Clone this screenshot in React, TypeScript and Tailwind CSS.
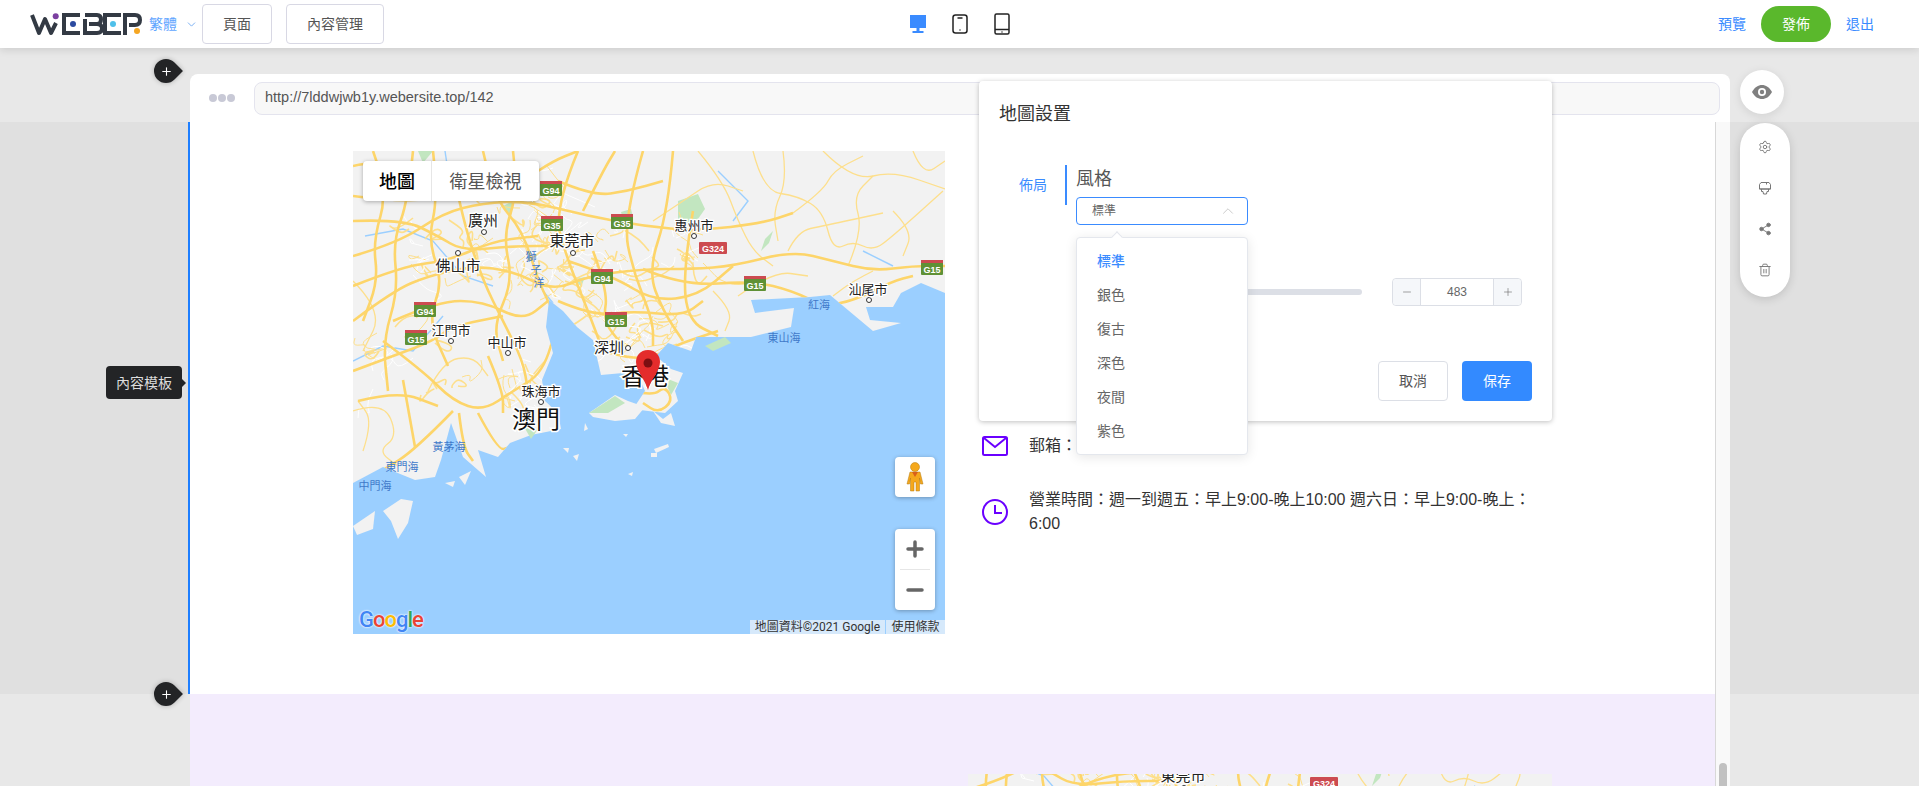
import { Settings, Share2, Trash2, ChevronDown, ChevronUp, Plus, Minus } from "lucide-react";

const ROADS_MAJOR = [
  [0, 105, 45, 92, 90, 62, 130, 52, 175, 50, 235, 65, 290, 75, 345, 80, 410, 72, 440, 62],
  [0, 45, 40, 50, 80, 48, 130, 42, 170, 30, 200, 10, 225, 0],
  [0, 170, 40, 140, 75, 125, 120, 115, 160, 120, 200, 140, 235, 125, 290, 118, 340, 118, 380, 115, 440, 100, 480, 110, 520, 120, 560, 115, 592, 115],
  [290, 118, 330, 135, 400, 130, 440, 140, 470, 155, 500, 150, 540, 130, 560, 125],
  [60, 0, 55, 50, 40, 90, 45, 140, 30, 190, 35, 240],
  [100, 20, 110, 70, 130, 130, 150, 170, 170, 210, 175, 240],
  [130, 0, 140, 45, 170, 80, 185, 130, 205, 170],
  [225, 0, 200, 60, 215, 110, 235, 160, 250, 200],
  [290, 0, 270, 70, 280, 120, 300, 170, 300, 195],
  [320, 0, 315, 60, 295, 120, 310, 160, 330, 190],
  [340, 60, 330, 120, 335, 170, 365, 185],
  [0, 220, 40, 205, 80, 190, 100, 175, 150, 165],
  [30, 190, 70, 220, 100, 250, 130, 260, 160, 240, 190, 222, 205, 170],
  [100, 260, 62, 299, 30, 319, 1, 336],
  [50, 229, 62, 296],
  [106, 262, 110, 296, 120, 310],
  [125, 262, 145, 300, 157, 296],
  [250, 200, 290, 212, 320, 195, 365, 180],
  [0, 15, 30, 8, 60, 30, 100, 40, 130, 30],
  [230, 60, 250, 20, 262, 0],
  [280, 240, 300, 245, 312, 235, 320, 250, 305, 262, 290, 252],
  [255, 250, 280, 240],
  [0, 70, 50, 68, 85, 85, 110, 100, 160, 95, 205, 95],
  [215, 110, 260, 125, 300, 150, 345, 145, 380, 115],
  [20, 0, 35, 40, 20, 90, 25, 130, 10, 170],
  [80, 0, 85, 45, 75, 90, 90, 130, 75, 170, 95, 215],
  [160, 0, 165, 40, 150, 85, 160, 130, 140, 175, 150, 210],
  [0, 135, 50, 115, 95, 110, 140, 90, 185, 85],
  [40, 170, 85, 150, 130, 150, 170, 170, 195, 150],
  [205, 30, 240, 45, 275, 40, 310, 30],
  [205, 150, 240, 165, 280, 160, 330, 165, 350, 150],
  [240, 100, 255, 140, 250, 170, 270, 195],
  [5, 250, 45, 240, 85, 255],
  [135, 205, 150, 240, 150, 262],
];

const ROADS_MINOR = [
  [400, 0, 410, 40, 445, 45, 470, 60, 480, 100, 500, 90, 520, 100, 540, 85, 590, 40],
  [345, 0, 370, 30, 385, 70, 400, 100, 420, 115],
  [440, 62, 470, 40, 480, 20, 510, 5],
  [520, 120, 500, 130, 480, 145],
  [0, 260, 30, 250, 45, 285, 25, 300, 45, 315],
  [470, 0, 500, 30, 540, 20, 592, 38],
  [360, 140, 380, 160, 372, 180],
  [300, 70, 330, 50, 360, 30, 390, 40],
  [0, 130, 30, 160, 10, 200],
  [75, 240, 90, 210, 120, 205, 135, 225],
  [435, 100, 445, 80, 470, 75, 530, 62],
  [430, 0, 434, 30, 420, 60, 425, 90],
  [540, 60, 560, 80, 550, 105],
  [495, 115, 510, 80, 500, 45, 520, 25],
  [560, 0, 570, 25, 592, 10],
  [385, 145, 420, 120, 455, 125],
  [10, 300, 20, 270, 5, 250],
];

const GREENS = [
  "M325 50 L345 43 L352 58 L340 75 L325 70 Z",
  "M412 88 L420 80 L416 92 L408 100 Z",
  "M268 61 L278 58 L280 66 L270 68 Z",
  "M222 128 L232 126 L228 136 Z",
  "M65 0 L80 0 L70 12 Z",
  "M150 55 L160 50 L158 65 Z",
  "M352 195 L372 186 L378 192 L360 200 Z",
  "M236 262 L262 245 L272 252 L255 262 Z",
  "M310 226 L325 232 L318 244 Z",
  "M170 274 L185 278 L178 288 Z",
];

const COAST =
  "M0 0 H592 V142 L568 132 L548 142 L540 156 L513 156 L517 169 L548 172 L520 180 L477 144 L457 146 L398 149 L402 162 L441 157 L438 176 L398 186 L366 186 L343 186 L338 200 L315 192 L303 205 L318 218 L330 222 L322 240 L325 250 L312 262 L295 260 L280 258 L292 240 L286 226 L270 222 L248 224 L240 189 L224 176 L210 160 L196 149 L193 176 L200 202 L189 229 L192 250 L205 262 L208 278 L178 284 L157 292 L145 306 L125 299 L133 326 L110 306 L98 272 L88 309 L82 326 L62 329 L30 316 L0 332 V349 Z";

const ISLANDS = [
  "M236 262 L262 244 L275 250 L292 256 L282 268 L262 270 L240 266 Z",
  "M0 375 L22 360 L20 378 L4 384 Z",
  "M30 360 L48 348 L60 350 L55 372 L45 388 L38 370 Z",
  "M300 260 L310 268 L318 262 L322 275 L308 272 Z",
  "M301 298 L315 293 L316 296 L303 302 Z",
  "M298 302 L304 302 L304 306 L298 306 Z",
  "M210 297 L216 297 L215 302 Z",
  "M220 305 L226 303 L224 310 Z",
  "M106 326 L118 320 L112 334 Z",
  "M92 332 L102 330 L100 336 Z",
  "M232 272 L235 278 L231 280 Z",
  "M270 283 L275 283 L273 286 Z",
  "M275 323 L280 321 L279 325 Z",
];

const RIVERS = [
  "M12 85 L50 78 L80 90 L110 125 L140 135",
  "M0 210 L30 195 L60 200 L90 165",
  "M178 105 L190 140 L200 152",
  "M365 20 L395 50 L380 70",
  "M510 100 L540 115",
  "M92 0 L98 40",
];

const CITY_LABELS = [
  { t: "廣州", x: 130, y: 75, s: 15, dx: 131, dy: 81 },
  { t: "東莞市", x: 219, y: 95, s: 15, dx: 220, dy: 102 },
  { t: "佛山市", x: 105, y: 120, s: 15, dx: 105, dy: 102 },
  { t: "惠州市", x: 341, y: 79, s: 13, dx: 341, dy: 85 },
  { t: "汕尾市", x: 515, y: 143, s: 13, dx: 516, dy: 149 },
  { t: "江門市", x: 98, y: 184, s: 13, dx: 98, dy: 190 },
  { t: "中山市", x: 154, y: 196, s: 13, dx: 155, dy: 202 },
  { t: "深圳", x: 256, y: 202, s: 15, dx: 275, dy: 197 },
  { t: "珠海市", x: 188, y: 245, s: 13, dx: 188, dy: 251 },
];

const WATER_LABELS = [
  { t: "紅海", x: 466, y: 158, s: 11 },
  { t: "東山海", x: 431, y: 191, s: 11 },
  { t: "黃茅海", x: 96, y: 300, s: 11 },
  { t: "東門海", x: 49, y: 320, s: 11 },
  { t: "中門海", x: 22, y: 339, s: 11 },
  { t: "獅", x: 178, y: 110, s: 11 },
  { t: "子", x: 183, y: 123, s: 11 },
  { t: "洋", x: 186, y: 136, s: 11 },
];

const SHIELDS = [
  { t: "G94", x: 198, y: 37 },
  { t: "G35", x: 199, y: 72 },
  { t: "G35", x: 269, y: 70 },
  { t: "G94", x: 249, y: 125 },
  { t: "G15", x: 402, y: 132 },
  { t: "G15", x: 579, y: 116 },
  { t: "G94", x: 72, y: 158 },
  { t: "G15", x: 263, y: 168 },
  { t: "G15", x: 63, y: 186 },
];

function smooth(a: number[]) {
  let d = `M${a[0]} ${a[1]}`;
  for (let i = 2; i < a.length - 2; i += 2) {
    const mx = (a[i] + a[i + 2]) / 2;
    const my = (a[i + 1] + a[i + 3]) / 2;
    d += ` Q${a[i]} ${a[i + 1]} ${mx} ${my}`;
  }
  d += ` L${a[a.length - 2]} ${a[a.length - 1]}`;
  return d;
}

// thin street mesh around the big cities, seeded so it never changes
function cityMesh(cx: number, cy: number, r: number, n: number, seed: number) {
  let s = seed;
  const rnd = () => {
    s = (s * 9301 + 49297) % 233280;
    return s / 233280;
  };
  const lines: string[] = [];
  for (let i = 0; i < n; i++) {
    const a: number[] = [cx + (rnd() - 0.5) * r * 2, cy + (rnd() - 0.5) * r * 1.4];
    for (let k = 0; k < 4; k++) {
      a.push(Math.round(a[a.length - 2] + (rnd() - 0.5) * 34));
      a.push(Math.round(a[a.length - 2] + (rnd() - 0.5) * 28));
    }
    lines.push(smooth(a.map((v) => Math.round(v))));
  }
  return lines;
}

const MESH = [
  ...cityMesh(130, 80, 75, 60, 11),
  ...cityMesh(225, 105, 55, 40, 37),
  ...cityMesh(280, 180, 45, 34, 71),
  ...cityMesh(345, 95, 30, 12, 5),
  ...cityMesh(170, 235, 25, 14, 93),
  ...cityMesh(60, 210, 50, 16, 53),
];

function MapArt({ viewBox, className, peek = false }: { viewBox: string; className: string; peek?: boolean }) {
  const cities = peek ? CITY_LABELS.filter((l) => l.t === "東莞市") : CITY_LABELS;
  return (
    <svg viewBox={viewBox} className={className} preserveAspectRatio="xMidYMin slice">
      <clipPath id="land">
        <path d={COAST} />
      </clipPath>
      <rect x="0" y="0" width="592" height="483" fill="#9bcfff" />
      <path d={COAST} fill="#f2f2f2" />
      {ISLANDS.map((d) => (
        <path key={d} d={d} fill="#f2f2f2" />
      ))}
      {GREENS.map((d) => (
        <path key={d} d={d} fill="#c2e6c0" />
      ))}
      <g clipPath="url(#land)">
        {RIVERS.map((d) => (
          <path key={d} d={d} fill="none" stroke="#9bcfff" strokeWidth="1.4" />
        ))}
        {MESH.map((d, i) => (
          <path key={i} d={d} fill="none" stroke={i % 3 === 0 ? "#ffffff" : "#fddf8c"} strokeWidth={i % 3 === 1 ? 1.6 : 1} />
        ))}
        {ROADS_MINOR.map((a, i) => (
          <path key={i} d={smooth(a)} fill="none" stroke="#fddf8c" strokeWidth="1.3" />
        ))}
        {ROADS_MAJOR.map((a, i) => (
          <path key={i} d={smooth(a)} fill="none" stroke="#fdd56a" strokeWidth="2.6" />
        ))}
      </g>
      {cities.map((l) => (
        <g key={l.t}>
          <circle cx={l.dx} cy={l.dy} r="2.5" fill="#fff" stroke="#333" strokeWidth="1" />
          <text x={l.x} y={l.y} fontSize={l.s} textAnchor="middle" fill="#222" stroke="#fff" strokeWidth="2.5" paintOrder="stroke">
            {l.t}
          </text>
        </g>
      ))}
      <rect x="346" y="91" width="28" height="12" rx="1" fill="#cc4b50" />
      <text x="360" y="101" fontSize="9" fontWeight="700" textAnchor="middle" fill="#fff">
        G324
      </text>
      {!peek && (
        <>
          <text x="183" y="277" fontSize="24" textAnchor="middle" fill="#111" stroke="#fff" strokeWidth="3" paintOrder="stroke">
            澳門
          </text>
          <text x="292" y="234" fontSize="24" textAnchor="middle" fill="#111" stroke="#fff" strokeWidth="3" paintOrder="stroke">
            香港
          </text>
          {WATER_LABELS.map((l) => (
            <text key={l.t} x={l.x} y={l.y} fontSize={l.s} textAnchor="middle" fill="#3f79c9">
              {l.t}
            </text>
          ))}
          {SHIELDS.map((s, i) => (
            <g key={i}>
              <rect x={s.x - 11} y={s.y - 7} width="22" height="15" rx="1" fill="#5f9135" />
              <rect x={s.x - 11} y={s.y - 7} width="22" height="3" fill="#cc4b50" />
              <text x={s.x} y={s.y + 6} fontSize="9" fontWeight="700" textAnchor="middle" fill="#fff">
                {s.t}
              </text>
            </g>
          ))}
          <path d="M295 199 C287 199 283 205 283 211 C283 220 292 228 295 239 C298 228 307 220 307 211 C307 205 303 199 295 199 Z" fill="#e42c2c" />
          <circle cx="295" cy="212" r="4.5" fill="#7c0f12" />
        </>
      )}
    </svg>
  );
}

function WebepLogo() {
  return (
    <svg width="112" height="26" viewBox="0 0 112 26" fill="none" stroke="#333a44" strokeWidth="4">
      <path d="M2 4 L9 22 L15 8 L21 22 L26 12" strokeLinejoin="round" />
      <path d="M50 4 H34 V22 H50" />
      <path d="M55 4 H67 Q71 4 71 8.5 Q71 13 67 13 H59 M67 13 Q72 13 72 17.5 Q72 22 67 22 H55 V8" />
      <path d="M91 4 H75 V22 H91" />
      <path d="M95 24 V4 H105 Q110 4 110 9 Q110 14 105 14 H99" />
      <circle cx="25.7" cy="5.3" r="3" fill="#7b3fa0" stroke="none" />
      <circle cx="43" cy="13" r="3" fill="#2b4aa0" stroke="none" />
      <circle cx="83" cy="13" r="3" fill="#4fc0ea" stroke="none" />
      <circle cx="107" cy="20" r="3" fill="#f5a623" stroke="none" />
    </svg>
  );
}

function DropPlus({ className }: { className: string }) {
  return (
    <div className={`absolute z-10 flex h-6 w-6 items-center justify-center ${className}`}>
      <div className="absolute inset-0 rotate-45 rounded-full rounded-tr-none bg-[#232426] shadow-[0_0_5px_rgba(0,0,0,0.25)]" />
      <Plus className="relative h-[13px] w-[13px] text-white" strokeWidth={2} />
    </div>
  );
}

const STYLE_OPTIONS = ["銀色", "復古", "深色", "夜間", "紫色"];

export default function App() {
  return (
    <div className="relative h-[786px] w-full overflow-hidden bg-[#e8e8e8] font-['Liberation_Sans','Noto_Sans_CJK_TC',sans-serif] text-[#333]">
      <header className="relative z-20 flex h-12 items-center bg-white pl-[30px] pr-[45px] shadow-[0_2px_8px_rgba(0,0,0,0.12)]">
        <WebepLogo />
        <span className="ml-[7px] text-sm text-[#5fa5ff]">繁體</span>
        <ChevronDown className="ml-[8px] h-[13px] w-[13px] text-[#5f9ff0]" strokeWidth={1.5} />
        <button className="ml-[4px] h-10 w-[70px] rounded border border-[#d8d8e4] text-sm text-[#555]">頁面</button>
        <button className="ml-[14px] h-10 w-[98px] rounded border border-[#d8d8e4] text-sm text-[#555]">內容管理</button>

        <div className="ml-[526px] flex items-center gap-[26px]">
          <svg width="16" height="18" viewBox="0 0 16 18">
            <rect x="0" y="0" width="16" height="13" fill="#3a8bff" />
            <rect x="6.5" y="13" width="3" height="3" fill="#3a8bff" />
            <rect x="2.5" y="16" width="11" height="2" fill="#3a8bff" />
          </svg>
          <svg width="16" height="20" viewBox="0 0 16 20" fill="none" stroke="#222" strokeWidth="1.5">
            <rect x="1" y="1" width="14" height="18" rx="2.5" />
            <path d="M5.5 4 H10.5" />
            <path d="M8 15.5 V16.5" />
          </svg>
          <svg width="16" height="22" viewBox="0 0 16 22" fill="none" stroke="#222" strokeWidth="1.5">
            <rect x="1" y="1" width="14" height="20" rx="1.5" />
            <path d="M1 16.5 H15" />
            <path d="M8 18.5 V19.5" />
          </svg>
        </div>

        <div className="ml-auto flex items-center">
          <span className="text-sm text-[#3a8bff]">預覽</span>
          <button className="ml-[15px] h-9 w-[70px] rounded-full bg-[#5ab82c] text-sm text-white">發佈</button>
          <span className="ml-[15px] text-sm text-[#3a8bff]">退出</span>
        </div>
      </header>

      <div className="grid h-[738px] grid-cols-[188px_1542px_189px]">
        <div className="flex flex-col">
          <div className="h-[74px]" />
          <div className="h-[572px] bg-[#e0e0e0]" />
        </div>

        <div className="pt-[26px]">
          <div className="ml-[2px] flex h-12 items-center rounded-t-lg bg-white pl-[19px] pr-[10px]">
            <div className="flex gap-[1px]">
              <span className="h-2 w-2 rounded-full bg-[#c8c9d6]" />
              <span className="h-2 w-2 rounded-full bg-[#c8c9d6]" />
              <span className="h-2 w-2 rounded-full bg-[#c8c9d6]" />
            </div>
            <div className="ml-[19px] flex h-[33px] flex-1 items-center rounded-lg border border-[#e4e4ee] bg-[#f8f8f8] pl-[10px] text-[14.5px] text-[#555]">
              http://7lddwjwb1y.webersite.top/142
            </div>
          </div>

          <div className="flex h-[664px]">
            <div className="w-[1528px] border-r border-[#d8d8d8]">
              <section className="flex h-[572px] border-l-2 border-[#1f7fff] bg-white pl-[163px] pt-[29px]">
                <div className="relative h-[483px] w-[592px] overflow-hidden">
                  <MapArt viewBox="0 0 592 483" className="h-full w-full" />
                  <div className="absolute left-[10px] top-[10px] flex h-10 rounded-sm bg-white text-[18px] shadow-[0_1px_4px_rgba(0,0,0,0.3)]">
                    <span className="flex w-[69px] items-center justify-center border-r border-[#e6e6e6] font-['Roboto','Noto_Sans_CJK_TC',sans-serif] font-medium text-black">地圖</span>
                    <span className="flex w-[107px] items-center justify-center font-['Roboto','Noto_Sans_CJK_TC',sans-serif] text-[#565656]">衛星檢視</span>
                  </div>
                  <div className="absolute left-[542px] top-[306px] flex h-10 w-10 items-center justify-center rounded-sm bg-white shadow-[0_1px_4px_rgba(0,0,0,0.3)]">
                    <svg width="18" height="30" viewBox="0 0 18 30">
                      <circle cx="9" cy="5" r="4.5" fill="#f5a81c" stroke="#b57a10" strokeWidth="0.5" />
                      <path d="M4 10 H14 L17 22 L14.5 22 L13.5 16 V29 H10 V20 H8 V29 H4.5 V16 L3.5 22 L1 22 Z" fill="#f5a81c" stroke="#b57a10" strokeWidth="0.5" />
                      <path d="M6 10 L9 15 L12 10 Z" fill="#d9601a" />
                    </svg>
                  </div>
                  <div className="absolute left-[542px] top-[378px] flex h-[81px] w-10 flex-col items-center rounded-sm bg-white shadow-[0_1px_4px_rgba(0,0,0,0.3)]">
                    <div className="flex h-10 items-center justify-center">
                      <Plus className="h-6 w-6 text-[#666]" strokeWidth={3.5} absoluteStrokeWidth />
                    </div>
                    <div className="h-px w-[30px] bg-[#e6e6e6]" />
                    <div className="flex h-10 items-center justify-center">
                      <Minus className="h-6 w-6 text-[#666]" strokeWidth={3.5} absoluteStrokeWidth />
                    </div>
                  </div>
                  <span className="absolute left-[6px] top-[457px] font-['Roboto',sans-serif] text-[22px] font-medium leading-6 tracking-[-1px] [text-shadow:0_0_2px_#fff,0_0_2px_#fff]">
                    <span className="text-[#4285f4]">G</span>
                    <span className="text-[#ea4335]">o</span>
                    <span className="text-[#fbbc05]">o</span>
                    <span className="text-[#4285f4]">g</span>
                    <span className="text-[#34a853]">l</span>
                    <span className="text-[#ea4335]">e</span>
                  </span>
                  <div className="absolute bottom-0 right-0 flex h-[14px] items-center font-['Roboto','Noto_Sans_CJK_TC',sans-serif] text-[12px] leading-[14px] text-[#333]">
                    <span className="flex h-full w-[135px] items-center justify-center whitespace-nowrap bg-[#d6e9fb]">地圖資料©2021 Google</span>
                    <span className="ml-px flex h-full w-[59px] items-center justify-center whitespace-nowrap bg-[#d6e9fb]">使用條款</span>
                  </div>
                </div>

                <div className="ml-[37px] mt-[283px] w-[560px]">
                  <div className="flex items-center gap-[21px]">
                    <svg className="shrink-0" width="26" height="20" viewBox="0 0 26 20" fill="none" stroke="#6a00ff" strokeWidth="2">
                      <rect x="1" y="1" width="24" height="18" rx="1.5" />
                      <path d="M2 2 L13 11 L24 2" />
                    </svg>
                    <span className="text-base leading-6">郵箱：</span>
                  </div>
                  <div className="mt-[30px] flex items-center gap-[21px]">
                    <svg className="shrink-0" width="26" height="26" viewBox="0 0 26 26" fill="none" stroke="#6a00ff" strokeWidth="2">
                      <circle cx="13" cy="13" r="12" />
                      <path d="M13 6 V14 H20" />
                    </svg>
                    <p className="w-[505px] text-base leading-6">營業時間：週一到週五：早上9:00-晚上10:00 週六日：早上9:00-晚上：6:00</p>
                  </div>
                </div>
              </section>

              <section className="ml-[2px] h-[92px] bg-[#f3ecfd] pl-[778px] pt-[80px]">
                <div className="h-3 w-[584px] overflow-hidden">
                  <MapArt viewBox="0 88 592 12" className="h-3 w-[584px]" peek />
                </div>
              </section>
            </div>

            <div className="relative w-[14px] bg-[#f9f9f9]">
              <div className="absolute left-[3px] top-[641px] h-10 w-2 rounded-full bg-[#c1c1c1]" />
            </div>
          </div>
        </div>

        <div className="flex flex-col">
          <div className="h-[74px]" />
          <div className="h-[572px] bg-[#e0e0e0]" />
        </div>
      </div>

      <DropPlus className="left-[154px] top-[59px]" />
      <DropPlus className="left-[154px] top-[682px]" />

      <div className="absolute left-[106px] top-[366px] z-10 flex h-[33px] w-[76px] items-center justify-center rounded bg-[#232426] text-sm text-[#ddd]">
        內容模板
        <span className="absolute right-[-4px] top-[13px] h-0 w-0 border-y-4 border-l-4 border-y-transparent border-l-[#232426]" />
      </div>

      <div className="absolute left-[1740px] top-[70px] z-10 flex flex-col gap-[9px]">
        <div className="flex h-11 w-11 items-center justify-center rounded-full bg-white shadow-[0_2px_10px_rgba(0,0,0,0.1)]">
          <svg width="20" height="14" viewBox="0 0 20 14">
            <path d="M0 7 C3 2 6 0 10 0 C14 0 17 2 20 7 C17 12 14 14 10 14 C6 14 3 12 0 7 Z" fill="#808080" />
            <circle cx="10" cy="7" r="4" fill="#fff" />
            <circle cx="10" cy="7" r="2.2" fill="#808080" />
          </svg>
        </div>
        <div className="flex h-[174px] w-[50px] flex-col items-center gap-[27px] rounded-full bg-white pt-[17px] text-[#777] shadow-[0_2px_10px_rgba(0,0,0,0.15)]">
          <Settings className="h-[14px] w-[14px]" strokeWidth={1.6} />
          <svg width="14" height="14" viewBox="0 0 14 14" fill="none" stroke="#777" strokeWidth="1">
            <path d="M3 1.5 H11 L12.5 3.5 V8 H1.5 V3.5 Z" />
            <path d="M1.5 8 H12.5 M3.5 8 V10.5 H5 L5.5 13 H8.5 L9 10.5 H10.5 V8" />
            <path d="M8.5 1.5 V3.5" />
          </svg>
          <Share2 className="h-[14px] w-[14px] fill-[#777]" strokeWidth={1.6} />
          <Trash2 className="h-[14px] w-[14px]" strokeWidth={1.6} />
        </div>
      </div>

      <div className="absolute left-[979px] top-[81px] z-10 flex h-[340px] w-[573px] flex-col rounded-sm bg-white pl-5 pr-5 pt-[21px] shadow-[0_1px_5px_rgba(0,0,0,0.25)]">
        <h2 className="text-lg leading-6 text-[#333]">地圖設置</h2>
        <div className="-ml-5 mt-[39px] flex h-[141px] items-start">
          <div className="flex h-10 w-[88px] items-center border-r-2 border-[#3a8bff] pl-10 text-sm text-[#3a8bff]">佈局</div>
          <div className="ml-[9px] pt-[2px]">
            <div className="text-lg leading-6 text-[#555]">風格</div>
            <div className="mt-[6px] flex h-7 w-[172px] items-center justify-between rounded border border-[#3a8bff] pl-[15px] pr-[10px] text-xs text-[#666]">
              標準
              <ChevronUp className="h-[18px] w-[18px] text-[#bbb]" strokeWidth={1} />
            </div>
            <div className="mt-[53px] flex items-center">
              <div className="h-1.5 w-[286px] rounded-full bg-[#dcdfe6]" />
              <div className="ml-[30px] flex h-7 w-[130px] items-center rounded border border-[#dcdfe6] text-xs text-[#666]">
                <span className="flex h-full w-7 items-center justify-center rounded-l border-r border-[#dcdfe6] bg-[#f5f7fa]">
                  <Minus className="h-3 w-3" strokeWidth={1.2} />
                </span>
                <span className="flex-1 text-center">483</span>
                <span className="flex h-full w-7 items-center justify-center rounded-r border-l border-[#dcdfe6] bg-[#f5f7fa]">
                  <Plus className="h-3 w-3" strokeWidth={1.2} />
                </span>
              </div>
            </div>
          </div>
        </div>
        <div className="mt-[55px] flex justify-end gap-[14px]">
          <button className="h-10 w-[70px] rounded border border-[#dcdfe6] text-sm text-[#555]">取消</button>
          <button className="h-10 w-[70px] rounded bg-[#338aff] text-sm text-white">保存</button>
        </div>

        <div className="absolute left-[97px] top-[156px] w-[172px] rounded border border-[#e4e7ed] bg-white py-[6px] text-sm text-[#666] shadow-[0_2px_12px_rgba(0,0,0,0.1)]">
          <span className="absolute left-[36px] top-[-5px] h-2 w-2 rotate-45 border-l border-t border-[#e4e7ed] bg-white" />
          <div className="flex h-[34px] items-center pl-[20px] font-medium text-[#3a8bff]">標準</div>
          {STYLE_OPTIONS.map((o) => (
            <div key={o} className="flex h-[34px] items-center pl-[20px]">
              {o}
            </div>
          ))}
        </div>
      </div>
    </div>
  );
}
